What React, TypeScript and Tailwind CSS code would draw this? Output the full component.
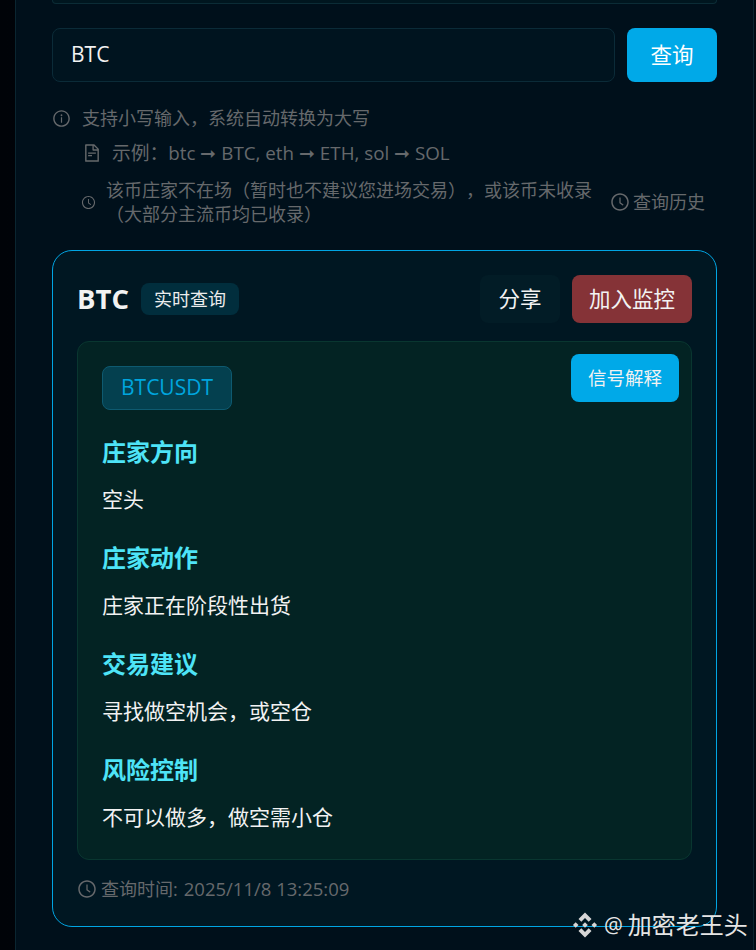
import { AiOutlineInfoCircle, AiOutlineFileText, AiOutlineClockCircle } from "react-icons/ai";

const sections = [
  ["庄家方向", "空头"],
  ["庄家动作", "庄家正在阶段性出货"],
  ["交易建议", "寻找做空机会\uFF0C或空仓"],
  ["风险控制", "不可以做多\uFF0C做空需小仓"],
];

export default function App() {
  return (
    <div className="relative h-[950px] w-[756px] overflow-hidden bg-gradient-to-r from-[#000308] to-[#000a13] font-['Open_Sans','Noto_Sans_CJK_SC',sans-serif]">
      <div className="ml-[15px] h-[950px] w-[739px] border-x border-[#0a2530] bg-[#00101b] px-[36px]">
        <div className="h-[4px] rounded-b-[12px] border border-t-0 border-[#0b2c36] bg-[#00161f]" />

        <div className="mt-[24px] flex gap-[12px]">
          <div className="flex h-[54px] flex-1 items-center rounded-[8px] border border-[#0b2b38] bg-[#00141f] px-[18px] text-[21px] text-[#f2f2f2]">
            BTC
          </div>
          <button className="h-[54px] w-[90px] rounded-[8px] bg-[#00a9e8] text-[21.5px] text-white">查询</button>
        </div>

        <div className="mt-[22px] flex h-[28px] items-center text-[18px] text-[#66696c]">
          <AiOutlineInfoCircle className="mr-[11px] text-[19px]" />
          <span>{"支持小写输入\uFF0C系统自动转换为大写"}</span>
        </div>
        <div className="mt-[7px] flex h-[28px] items-center pl-[30px] text-[18px] text-[#66696c]">
          <AiOutlineFileText className="mr-[10px] text-[20px]" />
          <span className="text-[18.8px]">{"示例\uFF1Abtc ➞ BTC, eth ➞ ETH, sol ➞ SOL"}</span>
        </div>
        <div className="mt-[11px] flex items-center pl-[29px] text-[18px] leading-[24px] text-[#66696c]">
          <AiOutlineClockCircle className="mr-[10px] shrink-0 text-[15px]" />
          <span className="w-[490px] shrink-0 [text-spacing-trim:space-all]">{"该币庄家不在场\uFF08暂时也不建议您进场交易\uFF09\uFF0C或该币未收录\uFF08大部分主流币均已收录\uFF09"}</span>
          <span className="ml-[14px] flex items-center whitespace-nowrap">
            <AiOutlineClockCircle className="mr-[3px] text-[20px]" />
            查询历史
          </span>
        </div>

        <div className="mt-[24px] h-[677px] rounded-[20px] border border-[#00a5e3] bg-[#001722] px-[24px] pt-[24px]">
          <div className="flex h-[48px] items-center">
            <span className="text-[27.5px] font-bold text-[#f2f2f2]">BTC</span>
            <span className="ml-[12px] flex h-[32px] items-center rounded-[8px] bg-[#012e3d] px-[13px] text-[18px] text-[#ececec]">实时查询</span>
            <button className="ml-auto h-[48px] w-[80px] rounded-[8px] bg-[#021c26] text-[21.5px] text-[#f2f2f2]">分享</button>
            <button className="ml-[12px] h-[48px] w-[120px] rounded-[8px] bg-[#853337] text-[21.5px] text-[#f2f2f2]">加入监控</button>
          </div>

          <div className="relative mt-[18px] h-[519px] rounded-[12px] border border-[#093630] bg-[#032323] px-[24px] pt-[24px]">
            <button className="absolute right-[12px] top-[12px] h-[48px] w-[108px] rounded-[8px] bg-[#00a9e8] text-[18.5px] text-[#f2f2f2]">信号解释</button>
            <div className="flex h-[44px] w-[130px] items-center justify-center rounded-[8px] border border-[#0e5a70] bg-[#04404f] text-[21px] text-[#00a5de]">
              BTCUSDT
            </div>
            <div className="mt-[26px]">
              {sections.map(([h, p]) => (
                <div key={h} className="mb-[27px]">
                  <h3 className="text-[24px] font-bold leading-[32px] text-[#4ee4f7]">{h}</h3>
                  <p className="mt-[15px] text-[21px] leading-[32px] text-[#f2f2f2]">{p}</p>
                </div>
              ))}
            </div>
          </div>

          <div className="mt-[16px] flex h-[26px] items-center text-[18px] text-[#66696c]">
            <AiOutlineClockCircle className="mr-[4px] text-[20px]" />
            查询时间: <span className="ml-[6px] text-[18.5px]">2025/11/8 13:25:09</span>
          </div>
        </div>
      </div>

      <div className="absolute left-[571px] top-[909px] flex items-center text-[24px] leading-[32px] text-[#e6e6e6]">
        <svg width="28" height="28" viewBox="0 0 28 28" fill="#d6d6d6" className="mr-[5px]">
          <path d="M14 1.5 20.5 8 17.7 10.8 14 7.1 10.3 10.8 7.5 8Z" />
          <path d="M14 26.5 7.5 20 10.3 17.2 14 20.9 17.7 17.2 20.5 20Z" />
          <path d="M4.7 11.2 7.5 14 4.7 16.8 1.9 14Z" />
          <path d="M23.3 11.2 26.1 14 23.3 16.8 20.5 14Z" />
          <path d="M14 11.2 16.8 14 14 16.8 11.2 14Z" />
        </svg>
        <span className="text-[21px]">@</span>
        <span className="ml-[5px]">加密老王头</span>
      </div>
    </div>
  );
}
